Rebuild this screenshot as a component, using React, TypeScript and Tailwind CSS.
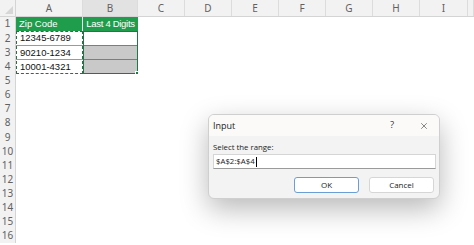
import { X } from 'lucide-react';

const columns = ['A', 'B', 'C', 'D', 'E', 'F', 'G', 'H', 'I', ''];
const colWidths = ['w-[67px]', 'w-[55px]', 'w-[47px]', 'w-[47px]', 'w-[47px]', 'w-[47px]', 'w-[47px]', 'w-[47px]', 'w-[48px]', 'flex-1'];

const zipRows = [
  { zip: '12345-6789', fill: 'bg-white' },
  { zip: '90210-1234', fill: 'bg-[#c9c9c9]' },
  { zip: '10001-4321', fill: 'bg-[#c9c9c9]' },
];

function ColumnHeader() {
  return (
    <div className="flex h-[17px] bg-[#f2f2f2] border-b border-[#d4d4d4]">
      {/* select-all corner */}
      <div className="w-[16px] shrink-0 border-r border-[#d4d4d4] relative">
        <div className="absolute right-[2px] bottom-[2px] w-0 h-0 border-l-[8px] border-l-transparent border-b-[8px] border-b-[#d6d6d6]" />
      </div>
      {columns.map((c, i) => (
        <div
          key={i}
          className={`${colWidths[i]} shrink-0 flex items-center justify-center text-[10px] text-[#616161] border-r border-[#dcdcdc] ${
            c === 'B' ? 'bg-[#e2e2e2]' : ''
          }`}
        >
          {c}
        </div>
      ))}
    </div>
  );
}

function RowNumber({ n }: { n: number }) {
  return (
    <div className="w-[16px] shrink-0 bg-[#f2f2f2] border-r border-[#d4d4d4] flex items-center justify-center text-[10px] text-[#616161]">
      {n}
    </div>
  );
}

export default function App() {
  return (
    <div className="relative w-[474px] h-[245px] overflow-hidden bg-white font-['Noto_Sans',sans-serif]">
      <ColumnHeader />

      {/* Row 1 */}
      <div className="flex h-[14.13px] font-['Liberation_Sans',sans-serif] text-[9.5px] leading-[14px] text-white">
        <RowNumber n={1} />
        <div className="w-[67px] shrink-0 bg-[#1f9d4c] pl-[3px] border-r border-[#e8f5ec]">
          Zip Code
        </div>
        <div className="w-[55px] shrink-0 bg-[#1f9d4c] whitespace-nowrap overflow-hidden text-center tracking-[-0.3px]">
          Last 4 Digits
        </div>
      </div>

      {/* Rows 2-4 with the copied range and selection */}
      <div className="relative">
        {zipRows.map((r, i) => (
          <div key={r.zip} className="flex h-[14.13px]">
            <RowNumber n={i + 2} />
            <div
              className={`w-[67px] shrink-0 text-[9.5px] text-[#111] pl-[4px] flex items-center font-['Liberation_Sans',sans-serif] ${
                i > 0 ? 'border-t border-[#9a9a9a]' : ''
              }`}
            >
              {r.zip}
            </div>
            <div className={`w-[55px] shrink-0 ${r.fill} ${i > 0 ? 'border-t border-[#7d7d7d]' : ''}`} />
          </div>
        ))}
        {/* marching ants around A2:A4 */}
        <div className="absolute left-[16px] top-0 w-[67px] h-[42.4px] border-[1.5px] border-dashed border-[#2e6b47] pointer-events-none" />
        {/* selection border around B2:B4 */}
        <div className="absolute left-[83px] top-0 w-[55px] h-[42.4px] border-[1.5px] border-[#1e7a45] pointer-events-none" />
        <div className="absolute left-[135px] top-[40px] w-[4px] h-[4px] bg-[#1e7a45] border border-white" />
      </div>

      {/* Rows 5-16 */}
      {Array.from({ length: 12 }, (_, i) => i + 5).map((n) => (
        <div key={n} className="flex h-[14.13px]">
          <RowNumber n={n} />
        </div>
      ))}

      {/* Input dialog */}
      <div className="absolute left-[208px] top-[114px] w-[232px] h-[85px] rounded-[6px] border border-[#cfcfcf] bg-[#f3f3f3] shadow-[0_10px_28px_rgba(0,0,0,0.28)] overflow-hidden font-['Open_Sans',sans-serif]">
        <div className="flex items-center h-[21px] bg-[#fbfaf9] pl-[4px] pr-[10px] text-[#1a1a1a]">
          <span className="text-[9px]">Input</span>
          <span className="ml-auto mr-[25px] text-[9.5px] text-[#333]">?</span>
          <X className="w-[10px] h-[10px] text-[#333]" strokeWidth={1.4} />
        </div>
        <div className="px-[4px] pt-[6px]">
          <div className="text-[7.8px] leading-[11px] text-[#1a1a1a]">Select the range:</div>
          <div className="mt-[1px] h-[15px] w-[223px] bg-white border border-[#d5d5d5] border-b-[#9a9a9a] flex items-center pl-[2px] text-[7.8px] text-[#1a1a1a]">
            $A$2:$A$4
            <span className="w-px h-[10px] bg-black ml-px" />
          </div>
          <div className="flex justify-end gap-[10px] mt-[8px] pr-[1px]">
            <button className="w-[65px] h-[16px] bg-white border border-[#6a9fd6] rounded-[3px] text-[8px] text-[#1a1a1a] flex items-center justify-center">
              OK
            </button>
            <button className="w-[65px] h-[16px] bg-white border border-[#d6d6d6] rounded-[3px] text-[8px] text-[#1a1a1a] flex items-center justify-center">
              Cancel
            </button>
          </div>
        </div>
      </div>
    </div>
  );
}
